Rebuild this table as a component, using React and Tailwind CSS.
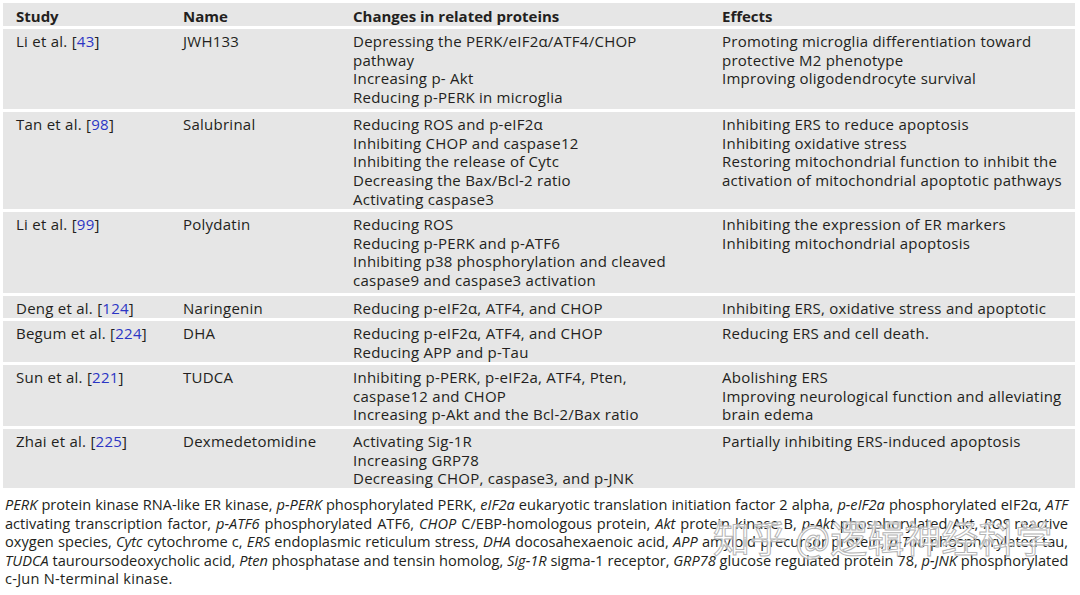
import React from 'react'

const rows = [
  {
    study: 'Li et al.',
    refNo: '43',
    name: 'JWH133',
    h: 'h-[80px]',
    changes: ['Depressing the PERK/eIF2α/ATF4/CHOP', 'pathway', 'Increasing p- Akt', 'Reducing p-PERK in microglia'],
    effects: ['Promoting microglia differentiation toward', 'protective M2 phenotype', 'Improving oligodendrocyte survival'],
  },
  {
    study: 'Tan et al.',
    refNo: '98',
    name: 'Salubrinal',
    h: 'h-[97px]',
    changes: [
      'Reducing ROS and p-eIF2α',
      'Inhibiting CHOP and caspase12',
      'Inhibiting the release of Cytc',
      'Decreasing the Bax/Bcl-2 ratio',
      'Activating caspase3',
    ],
    effects: [
      'Inhibiting ERS to reduce apoptosis',
      'Inhibiting oxidative stress',
      'Restoring mitochondrial function to inhibit the',
      'activation of mitochondrial apoptotic pathways',
    ],
  },
  {
    study: 'Li et al.',
    refNo: '99',
    name: 'Polydatin',
    h: 'h-[81px]',
    changes: [
      'Reducing ROS',
      'Reducing p-PERK and p-ATF6',
      'Inhibiting p38 phosphorylation and cleaved',
      'caspase9 and caspase3 activation',
    ],
    effects: ['Inhibiting the expression of ER markers', 'Inhibiting mitochondrial apoptosis'],
  },
  {
    study: 'Deng et al.',
    refNo: '124',
    name: 'Naringenin',
    h: 'h-[22px]',
    changes: ['Reducing p-eIF2α, ATF4, and CHOP'],
    effects: ['Inhibiting ERS, oxidative stress and apoptotic'],
  },
  {
    study: 'Begum et al.',
    refNo: '224',
    name: 'DHA',
    h: 'h-[41px]',
    changes: ['Reducing p-eIF2α, ATF4, and CHOP', 'Reducing APP and p-Tau'],
    effects: ['Reducing ERS and cell death.'],
  },
  {
    study: 'Sun et al.',
    refNo: '221',
    name: 'TUDCA',
    h: 'h-[61px]',
    changes: ['Inhibiting p-PERK, p-eIF2a, ATF4, Pten,', 'caspase12 and CHOP', 'Increasing p-Akt and the Bcl-2/Bax ratio'],
    effects: ['Abolishing ERS', 'Improving neurological function and alleviating', 'brain edema'],
  },
  {
    study: 'Zhai et al.',
    refNo: '225',
    name: 'Dexmedetomidine',
    h: 'h-[59px]',
    changes: ['Activating Sig-1R', 'Increasing GRP78', 'Decreasing CHOP, caspase3, and p-JNK'],
    effects: ['Partially inhibiting ERS-induced apoptosis'],
  },
]

// each footnote line, [italic, plain] pairs
const notes = [
  [['PERK', ' protein kinase RNA-like ER kinase, '], ['p-PERK', ' phosphorylated PERK, '], ['eIF2a', ' eukaryotic translation initiation factor 2 alpha, '], ['p-eIF2a', ' phosphorylated eIF2α, '], ['ATF', '']],
  [['', 'activating transcription factor, '], ['p-ATF6', ' phosphorylated ATF6, '], ['CHOP', ' C/EBP-homologous protein, '], ['Akt', ' protein kinase B, '], ['p-Akt', ' phosphorylated Akt, '], ['ROS', ' reactive']],
  [['', 'oxygen species, '], ['Cytc', ' cytochrome c, '], ['ERS', ' endoplasmic reticulum stress, '], ['DHA', ' docosahexaenoic acid, '], ['APP', ' amyloid precursor protein, '], ['p-Tau', ' phosphorylated tau,']],
  [['TUDCA', ' tauroursodeoxycholic acid, '], ['Pten', ' phosphatase and tensin homolog, '], ['Sig-1R', ' sigma-1 receptor, '], ['GRP78', ' glucose regulated protein 78, '], ['p-JNK', ' phosphorylated']],
  [['', 'c-Jun N-terminal kinase.']],
]

function Cell({ lines }) {
  return (
    <div>
      {lines.map((l, i) => (
        <div key={i} className="whitespace-nowrap">
          {l}
        </div>
      ))}
    </div>
  )
}

export default function App() {
  return (
    <div className="relative w-[1080px] h-[595px] bg-white text-[#231f20] font-['Open_Sans',sans-serif] overflow-hidden">
      {/* Table */}
      <div className="ml-[3px] mt-[3px] w-[1072px] flex flex-col gap-[3px] text-[15px] leading-[18.7px]">
        <div className="grid grid-cols-[167px_170px_369px_1fr] pl-[13px] pt-[4px] h-[23px] bg-[#e6e6e6] font-bold">
          <div>Study</div>
          <div>Name</div>
          <div>Changes in related proteins</div>
          <div>Effects</div>
        </div>
        {rows.map((r, i) => (
          <div key={i} className={`grid grid-cols-[167px_170px_369px_1fr] pl-[13px] pt-[3px] bg-[#e6e6e6] tracking-[0.25px] ${r.h}`}>
            <div className="whitespace-nowrap">
              {r.study} [<span className="text-[#2b35c4]">{r.refNo}</span>]
            </div>
            <div>{r.name}</div>
            <Cell lines={r.changes} />
            <Cell lines={r.effects} />
          </div>
        ))}
      </div>

      {/* Footnote */}
      <div className="ml-[5px] mt-[7px] w-[1063px] text-[14.6px] leading-[18.6px]">
        {notes.map((line, i) => (
          <div
            key={i}
            className={i < notes.length - 1 ? 'text-justify [text-align-last:justify] whitespace-nowrap' : 'whitespace-nowrap tracking-[0.25px]'}
          >
            {line.map(([it, txt], j) => (
              <React.Fragment key={j}>
                {it && <i>{it}</i>}
                {txt}
              </React.Fragment>
            ))}
          </div>
        ))}
      </div>

      {/* Watermark */}
      <div className="absolute left-[713px] top-[519px] text-[37px] leading-none text-white/70 font-['Noto_Sans_CJK_SC',sans-serif] [-webkit-text-stroke:1px_#b4b4b4] whitespace-nowrap pointer-events-none">
        知乎 @逻辑神经科学
      </div>
    </div>
  )
}
